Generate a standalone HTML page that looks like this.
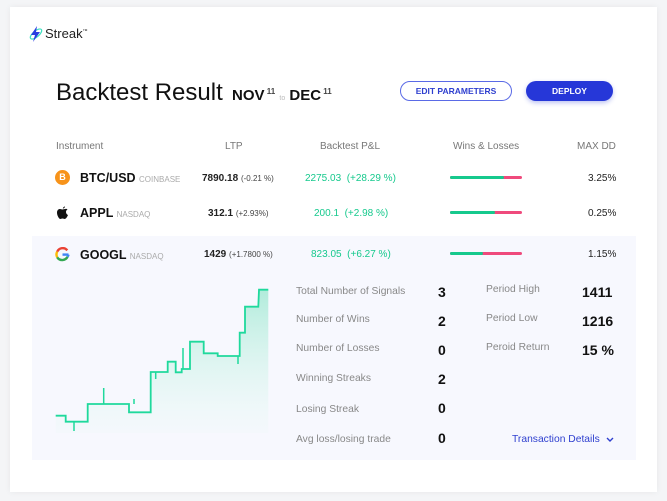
<!DOCTYPE html>
<html><head><meta charset="utf-8"><style>
*{margin:0;padding:0;box-sizing:border-box}
body{width:667px;height:501px;background:#f4f5f7;font-family:"Liberation Sans",sans-serif;position:relative;overflow:hidden;color:#111}
.card{position:absolute;left:10px;top:7px;width:647px;height:485px;background:#fff;box-shadow:0 0 6px rgba(0,0,0,.06)}
.a{position:absolute;white-space:nowrap}
.hd{font-size:10px;color:#777}
.nm{font-size:12.5px;font-weight:bold;color:#111}
.ex{font-size:8px;color:#aaa;font-weight:normal}
.ltp{font-size:10px;font-weight:bold;color:#222}
.ltp span{font-size:8px;font-weight:normal;color:#444}
.pl{font-size:10px;color:#16c98d}
.bar{position:absolute;height:3px;border-radius:2px;width:72px;left:450px;background:#ef4a7c}
.bar i{display:block;height:3px;background:#16c98d;border-radius:2px}
.dd{font-size:10px;color:#222;left:588px}
.sl{font-size:10.3px;color:#888}
.sv{font-size:14px;font-weight:bold;color:#111}
.btn{display:flex;align-items:center;justify-content:center;font-size:8.5px;font-weight:bold;border-radius:10px}
</style></head><body>
<div class="card"></div>
<svg class="a" style="left:28px;top:25px" width="16" height="18" viewBox="0 0 16 18"><ellipse cx="8" cy="9" rx="7" ry="3" fill="none" stroke="#3ee0c0" stroke-width="1.2" transform="rotate(-40 8 9)"/><path d="M9 1 L3 10 L7 10 L5 17 L12 7 L8 7 Z" fill="#2a3de0"/></svg>
<div class="a" style="left:45px;top:26px;font-size:13px;color:#222">Streak<sup style="font-size:5px">™</sup></div>
<div class="a" style="left:56px;top:79px;font-size:24px;color:#111">Backtest Result</div>
<div class="a" style="left:232px;top:87px;font-size:15px;font-weight:bold">NOV<sup style="font-size:8px;color:#444"> 11</sup> <span style="font-size:7px;color:#bbb;font-weight:normal">to</span> DEC<sup style="font-size:8px;color:#444"> 11</sup></div>
<div class="a btn" style="left:400px;top:81px;width:112px;height:20px;border:1.5px solid #5a6ae6;color:#2e3fcf">EDIT PARAMETERS</div>
<div class="a btn" style="left:526px;top:81px;width:87px;height:20px;background:#2637d8;color:#fff;box-shadow:0 2px 5px rgba(38,55,216,.3)">DEPLOY</div>
<div class="a hd" style="left:56px;top:141px">Instrument</div>
<div class="a hd" style="left:225px;top:141px">LTP</div>
<div class="a hd" style="left:320px;top:141px">Backtest P&amp;L</div>
<div class="a hd" style="left:453px;top:141px">Wins &amp; Losses</div>
<div class="a hd" style="left:577px;top:141px">MAX DD</div>

<div class="a" style="left:32px;top:236px;width:604px;height:224px;background:#f7f8fe"></div>

<div class="a" style="left:55px;top:170px;width:15px;height:15px;border-radius:50%;background:#f7931a;color:#fff;font-size:9px;font-weight:bold;text-align:center;line-height:15px">B</div>
<div class="a nm" style="left:80px;top:171px">BTC/USD <span class="ex">COINBASE</span></div>
<div class="a ltp" style="left:202px;top:173px">7890.18 <span>(-0.21 %)</span></div>
<div class="a pl" style="left:305px;top:173px">2275.03 &nbsp;(+28.29 %)</div>
<div class="bar" style="top:176px"><i style="width:54px"></i></div>
<div class="a dd" style="top:173px">3.25%</div>

<svg class="a" style="left:55px;top:205px" width="15" height="15" viewBox="0 0 15 15"><path d="M10 1.5c-1 .1-2 .8-2.2 2 1 .1 2-.7 2.2-2zM7.5 4.5c-1 0-1.6-.5-2.5-.5C3.4 4 2 5.3 2 7.6 2 10.5 4 14 5.3 14c.8 0 1.1-.5 2.2-.5s1.3.5 2.2.5C11 14 12.5 11.3 13 10c-1.3-.6-2-1.7-2-3 0-1.2.6-2 1.5-2.6C11.8 3.6 10.8 4 10 4c-1 0-1.7.5-2.5.5z" fill="#111"/></svg>
<div class="a nm" style="left:80px;top:206px">APPL <span class="ex">NASDAQ</span></div>
<div class="a ltp" style="left:208px;top:208px">312.1 <span>(+2.93%)</span></div>
<div class="a pl" style="left:314px;top:208px">200.1 &nbsp;(+2.98 %)</div>
<div class="bar" style="top:211px"><i style="width:45px"></i></div>
<div class="a dd" style="top:208px">0.25%</div>

<svg class="a" style="left:55px;top:247px" width="15" height="15" viewBox="0 0 15 15"><path d="M13.5 7.6H7.5" stroke="#4285f4" stroke-width="2.4"/><path d="M12.3 3.3A6 6 0 0 0 2.2 4.7" fill="none" stroke="#ea4335" stroke-width="2.4"/><path d="M2.2 4.7A6 6 0 0 0 2.2 10.3" fill="none" stroke="#fbbc05" stroke-width="2.4"/><path d="M2.2 10.3A6 6 0 0 0 12.6 9.7" fill="none" stroke="#34a853" stroke-width="2.4"/><path d="M12.6 9.7A6 6 0 0 0 13.5 7.6" fill="none" stroke="#4285f4" stroke-width="2.4"/></svg>
<div class="a nm" style="left:80px;top:248px">GOOGL <span class="ex">NASDAQ</span></div>
<div class="a ltp" style="left:204px;top:249px">1429 <span>(+1.7800 %)</span></div>
<div class="a pl" style="left:311px;top:249px">823.05 &nbsp;(+6.27 %)</div>
<div class="bar" style="top:252px"><i style="width:33px"></i></div>
<div class="a dd" style="top:249px">1.15%</div>

<svg class="a" style="left:0;top:0" width="667" height="501">
<defs><linearGradient id="g" x1="0" y1="0" x2="0" y2="1"><stop offset="0" stop-color="#9fe8d2" stop-opacity=".8"/><stop offset="1" stop-color="#e8faf4" stop-opacity=".2"/></linearGradient></defs>
<path d="M55.7,415.7H65.7V421.7H87.7V404H129V412.3H150.7V372H167.7V361.7H175.7V372.3H181.7V369H190V341.7H203.7V353.3H217.7V356H239.7V332.7H245V306.7H258.3L259,289.7H268.3V433H55.7Z" fill="url(#g)"/>
<path d="M55.7,415.7H65.7V421.7H87.7V404H129V412.3H150.7V372H167.7V361.7H175.7V372.3H181.7V369H190V341.7H203.7V353.3H217.7V356H239.7V332.7H245V306.7H258.3L259,289.7H268.3" fill="none" stroke="#1fd99c" stroke-width="1.8"/>
<path d="M74,421V431M103.7,404V388M134,404V399M155.7,372V379M183,369V348M238,356V364" stroke="#1fd99c" stroke-width="1.5"/>
</svg>

<div class="a sl" style="left:296px;top:286px">Total Number of Signals</div><div class="a sv" style="left:438px;top:284px">3</div>
<div class="a sl" style="left:296px;top:314px">Number of Wins</div><div class="a sv" style="left:438px;top:313px">2</div>
<div class="a sl" style="left:296px;top:343px">Number of Losses</div><div class="a sv" style="left:438px;top:342px">0</div>
<div class="a sl" style="left:296px;top:373px">Winning Streaks</div><div class="a sv" style="left:438px;top:371px">2</div>
<div class="a sl" style="left:296px;top:404px">Losing Streak</div><div class="a sv" style="left:438px;top:400px">0</div>
<div class="a sl" style="left:296px;top:434px">Avg loss/losing trade</div><div class="a sv" style="left:438px;top:430px">0</div>
<div class="a sl" style="left:486px;top:284px">Period High</div><div class="a sv" style="left:582px;top:284px">1411</div>
<div class="a sl" style="left:486px;top:313px">Period Low</div><div class="a sv" style="left:582px;top:313px">1216</div>
<div class="a sl" style="left:486px;top:342px">Peroid Return</div><div class="a sv" style="left:582px;top:342px">15 %</div>
<div class="a" style="left:512px;top:434px;font-size:10.3px;color:#2e3fcf">Transaction Details</div>
<svg class="a" style="left:606px;top:437px" width="8" height="6"><path d="M1 1L4 4L7 1" fill="none" stroke="#2e3fcf" stroke-width="1.4"/></svg>
</body></html>
